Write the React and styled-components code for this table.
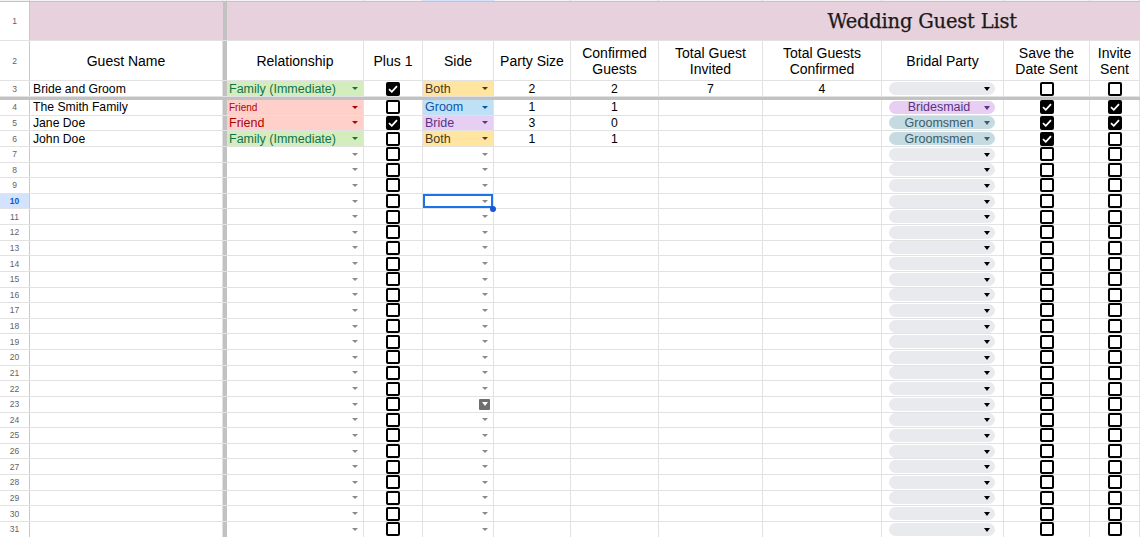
import React from 'react'
import styled, { createGlobalStyle, css } from 'styled-components'

const GlobalStyle = createGlobalStyle`
  html, body {
    margin: 0;
    padding: 0;
    background: #fff;
  }
  body {
    font-family: "Liberation Sans", Arial, sans-serif;
    color: #000;
    overflow: hidden;
  }
  * { box-sizing: border-box; }
`

const COLS = '30px 193px 4px 137px 59px 71px 77px 88px 104px 119px 122px 86px 50px'

// chip palettes
const REL = {
  fam: { bg: '#d4edbc', fg: '#11734b', label: 'Family (Immediate)', size: 12.5 },
  friend: { bg: '#ffcfc9', fg: '#b10202', label: 'Friend', size: 12.5 },
  friendSmall: { bg: '#ffcfc9', fg: '#b10202', label: 'Friend', size: 10 }
}

const SIDE = {
  Both: { bg: '#ffe5a0', fg: '#473821' },
  Groom: { bg: '#bfe1f6', fg: '#0a53a8' },
  Bride: { bg: '#e6cff2', fg: '#5a3286' }
}

const BRIDAL = {
  Bridesmaid: { bg: '#e6cff2', fg: '#5a3286' },
  Groomsmen: { bg: '#c6dbe1', fg: '#3b5c69' }
}

// styles
const Sheet = styled.div`
  width: 1140px;
  height: 537px;
  overflow: hidden;
  display: flex;
  flex-direction: column;
`

const Row = styled.div`
  display: grid;
  grid-template-columns: ${COLS};
  height: ${(p) => p.$h}px;
  flex-shrink: 0;
  border-bottom: 1px solid #e2e2e2;
`

const TopStrip = styled.div`
  display: grid;
  grid-template-columns: ${COLS};
  height: 2px;
  flex-shrink: 0;
  background: #f3f3f3;
  border-bottom: 1px solid #c4c4c4;
`

const StripCell = styled.div`
  background: ${(p) => (p.$active ? '#d3e3fd' : 'transparent')};
  border-right: 1px solid #dadada;
`

const FreezeLine = styled.div`
  height: 3px;
  flex-shrink: 0;
  background: #c2c2c2;
`

const FreezeCol = styled.div`
  background: #c2c2c2;
`

const RowNum = styled.div`
  display: flex;
  align-items: center;
  justify-content: center;
  font-size: 8.5px;
  color: #5f6368;
  border-right: 1px solid #c9c9c9;
  ${(p) => p.$active && css`
    background: #d3e3fd;
    color: #0b57d0;
    font-weight: 700;
  `}
`

const Cell = styled.div`
  position: relative;
  display: flex;
  align-items: center;
  justify-content: ${(p) => p.$align || 'flex-start'};
  padding: 0 3px;
  font-size: 12.2px;
  white-space: nowrap;
  border-right: 1px solid #e2e2e2;
  overflow: visible;
  background: ${(p) => p.$bg || 'transparent'};
  color: ${(p) => p.$fg || '#000'};
  ${(p) => p.$selected && css`
    box-shadow: inset 0 0 0 2px #1a73e8;
    &::after {
      content: '';
      position: absolute;
      right: -3px;
      bottom: -4px;
      width: 6px;
      height: 6px;
      border-radius: 50%;
      background: #1a55d6;
      z-index: 3;
    }
  `}
`

const TitleRowLeft = styled.div`
  background: #e6d1dd;
`

const TitleCell = styled.div`
  grid-column: 4 / -1;
  background: #e6d1dd;
  display: flex;
  align-items: center;
  justify-content: flex-end;
  padding-right: 123px;
  font-family: "DejaVu Serif", "Liberation Serif", serif;
  font-size: 19.5px;
  letter-spacing: -0.2px;
  color: #1a1a1a;
  -webkit-text-stroke: 0.25px #1a1a1a;
`

const HeadCell = styled.div`
  display: flex;
  align-items: center;
  justify-content: center;
  text-align: center;
  font-size: 14px;
  line-height: 16px;
  white-space: pre-line;
  border-right: 1px solid #e2e2e2;
`

const ChipCell = styled(Cell)`
  justify-content: space-between;
  padding: 0 5px 0 2px;
  font-size: ${(p) => p.$size || 12.5}px;
`

const Arrow = styled.span`
  width: 0;
  height: 0;
  border-left: ${(p) => (p.$big ? 3.5 : 3)}px solid transparent;
  border-right: ${(p) => (p.$big ? 3.5 : 3)}px solid transparent;
  border-top: ${(p) => (p.$big ? 4 : 3.5)}px solid ${(p) => p.$color || '#8a8a8a'};
  flex-shrink: 0;
`

const HoverArrow = styled.span`
  width: 11px;
  height: 11px;
  border-radius: 1px;
  background: #6f6f6f;
  display: flex;
  align-items: center;
  justify-content: center;
  margin-right: -2px;

  &::before {
    content: '';
    border-left: 3px solid transparent;
    border-right: 3px solid transparent;
    border-top: 4px solid #fff;
  }
`

const Pill = styled.div`
  width: 106px;
  height: 13px;
  margin-left: 4px;
  border-radius: 7px;
  background: ${(p) => p.$bg || '#e8eaed'};
  color: ${(p) => p.$fg || '#000'};
  display: flex;
  align-items: center;
  justify-content: center;
  position: relative;
  font-size: 12.5px;
  padding-right: 6px;

  & > span:last-child {
    position: absolute;
    right: 5px;
    top: 5px;
  }
`

const Box = styled.span`
  width: 14px;
  height: 14px;
  border: 2px solid #000;
  border-radius: 2px;
  background: ${(p) => (p.$on ? '#000' : '#fff')};
  display: flex;
  align-items: center;
  justify-content: center;
`

const Check = ({ on }) => (
  <Box $on={on}>
    {on && (
      <svg width='10' height='8' viewBox='0 0 10 8'>
        <path d='M1 4.2 L3.8 6.8 L9 1.2' fill='none' stroke='#fff' strokeWidth='1.8' />
      </svg>
    )}
  </Box>
)

const HEADERS = [
  'Guest Name', null, 'Relationship', 'Plus 1', 'Side', 'Party Size',
  'Confirmed\nGuests', 'Total Guest\nInvited', 'Total Guests\nConfirmed',
  'Bridal Party', 'Save the\nDate Sent', 'Invite\nSent'
]

const GUESTS = [
  { n: 3, name: 'Bride and Groom', rel: 'fam', plus: true, side: 'Both', party: 2, conf: 2, inv: 7, tconf: 4, bridal: null, save: false, invite: false },
  { n: 4, name: 'The Smith Family', rel: 'friendSmall', plus: false, side: 'Groom', party: 1, conf: 1, bridal: 'Bridesmaid', save: true, invite: true },
  { n: 5, name: 'Jane Doe', rel: 'friend', plus: true, side: 'Bride', party: 3, conf: 0, bridal: 'Groomsmen', save: true, invite: true },
  { n: 6, name: 'John Doe', rel: 'fam', plus: false, side: 'Both', party: 1, conf: 1, bridal: 'Groomsmen', save: true, invite: false }
]

for (let n = 7; n <= 31; n++) GUESTS.push({ n })

const GuestRow = ({ g, h }) => {
  const rel = g.rel && REL[g.rel]
  const side = g.side && SIDE[g.side]
  const bridal = g.bridal && BRIDAL[g.bridal]

  return (
    <Row $h={h}>
      <RowNum $active={g.n === 10}>{g.n}</RowNum>
      <Cell>{g.name}</Cell>
      <FreezeCol />
      {rel
        ? (
          <ChipCell $bg={rel.bg} $fg={rel.fg} $size={rel.size}>
            {rel.label}
            <Arrow $color={rel.fg} />
          </ChipCell>
          )
        : (
          <ChipCell>
            <span />
            <Arrow />
          </ChipCell>
          )}
      <Cell $align='center'>
        <Check on={!!g.plus} />
      </Cell>
      {side
        ? (
          <ChipCell $bg={side.bg} $fg={side.fg}>
            {g.side}
            <Arrow $color={side.fg} />
          </ChipCell>
          )
        : (
          <ChipCell $selected={g.n === 10}>
            <span />
            {g.n === 23 ? <HoverArrow /> : <Arrow />}
          </ChipCell>
          )}
      <Cell $align='center'>{g.party}</Cell>
      <Cell $align='center'>{g.conf}</Cell>
      <Cell $align='center'>{g.inv}</Cell>
      <Cell $align='center'>{g.tconf}</Cell>
      <Cell>
        <Pill $bg={bridal && bridal.bg} $fg={bridal && bridal.fg}>
          <span>{g.bridal}</span>
          <Arrow $big $color={bridal ? bridal.fg : '#000'} />
        </Pill>
      </Cell>
      <Cell $align='center'>
        <Check on={!!g.save} />
      </Cell>
      <Cell $align='center'>
        <Check on={!!g.invite} />
      </Cell>
    </Row>
  )
}

const App = () => {
  return (
    <>
      <GlobalStyle />
      <Sheet>
        <TopStrip>
          {Array.from({ length: 13 }).map((_, i) => (
            <StripCell key={i} $active={i === 5} />
          ))}
        </TopStrip>

        <Row $h={39}>
          <RowNum>1</RowNum>
          <TitleRowLeft />
          <FreezeCol />
          <TitleCell>Wedding Guest List</TitleCell>
        </Row>

        <Row $h={40}>
          <RowNum>2</RowNum>
          {HEADERS.map((h, i) =>
            h === null ? <FreezeCol key={i} /> : <HeadCell key={i}>{h}</HeadCell>
          )}
        </Row>

        <GuestRow g={GUESTS[0]} h={16} />
        <FreezeLine />
        {GUESTS.slice(1).map((g) => (
          <GuestRow key={g.n} g={g} h={15.625} />
        ))}
      </Sheet>
    </>
  )
}

export default App
